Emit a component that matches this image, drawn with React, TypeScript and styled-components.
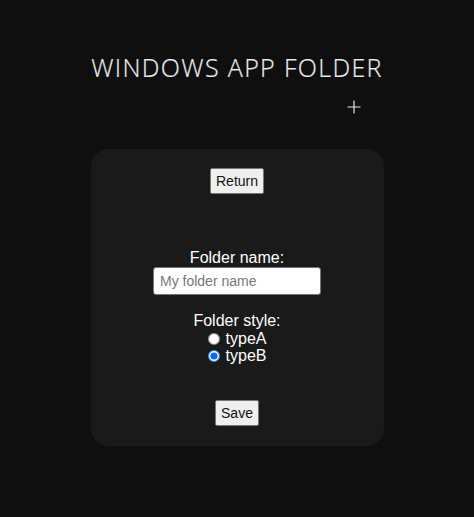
import React, { useState } from 'react'
import styled, { createGlobalStyle } from 'styled-components'

const GlobalStyle = createGlobalStyle`
  html, body {
    margin: 0;
    padding: 0;
    background: #0f0f10;
  }
  body {
    font-family: "Liberation Sans", Arial, sans-serif;
  }
`

const Page = styled.div`
  min-height: 517px;
  display: flex;
  flex-direction: column;
  align-items: center;
  padding-top: 50px;
  box-sizing: border-box;
`

const Title = styled.h1`
  margin: 0;
  font-family: "Open Sans", sans-serif;
  font-weight: 300;
  font-size: 25px;
  line-height: 34px;
  letter-spacing: 1.35px;
  color: #ececec;
  -webkit-text-stroke: 0.2px #ececec;
`

const AddRow = styled.div`
  width: 290px;
  display: flex;
  justify-content: flex-end;
  padding-right: 20px;
  box-sizing: border-box;
  margin-top: 15px;
  height: 16px;
`

const AddButton = styled.button`
  background: none;
  border: none;
  padding: 0;
  width: 16px;
  height: 16px;
  display: flex;
  align-items: center;
  justify-content: center;
  cursor: pointer;
`

const Panel = styled.div`
  margin-top: 34px;
  width: 293px;
  height: 297px;
  background: #1a1a1a;
  border-radius: 18px;
  display: flex;
  flex-direction: column;
  align-items: center;
  padding: 19px 0 18px;
  box-sizing: border-box;
  color: #ffffff;
`

const PlainButton = styled.button<{ $top?: number }>`
  margin-top: ${({ $top }) => $top ?? 0}px;
  font-family: "Liberation Sans", Arial, sans-serif;
  font-size: 14px;
  padding: 4px 5px;
  background: #efefef;
  color: #111;
  border: 1px solid #767676;
  border-radius: 2px;
  height: 26px;
  line-height: 16px;
`

const Field = styled.div<{ $top: number }>`
  margin-top: ${({ $top }) => $top}px;
  display: flex;
  flex-direction: column;
  align-items: center;
`

const Label = styled.label`
  font-size: 16px;
  line-height: 18px;
`

const TextInput = styled.input`
  width: 168px;
  height: 28px;
  box-sizing: border-box;
  border: 1px solid #767676;
  border-radius: 3px;
  padding: 0 6px;
  font-family: "Liberation Sans", Arial, sans-serif;
  font-size: 14px;
  color: #111;
  background: #fff;
  &::placeholder {
    color: #777;
  }
`

const RadioRow = styled.label`
  display: flex;
  align-items: center;
  font-size: 16px;
  line-height: 17px;
`

const Radio = styled.input`
  margin: 0 6px 0 0;
  width: 12px;
  height: 12px;
  accent-color: #0b6cf0;
`

export default function App() {
  const [style, setStyle] = useState('typeB')
  return (
    <>
      <GlobalStyle />
      <Page>
        <Title>WINDOWS APP FOLDER</Title>
        <AddRow>
          <AddButton aria-label="Add">
            <svg width="14" height="14" viewBox="0 0 14 14">
              <path d="M7 0.5V13.5M0.5 7H13.5" stroke="#e8e8e8" strokeWidth="1.2" />
            </svg>
          </AddButton>
        </AddRow>
        <Panel>
          <PlainButton>Return</PlainButton>
          <Field $top={55}>
            <Label htmlFor="fname">Folder name:</Label>
            <TextInput id="fname" placeholder="My folder name" />
          </Field>
          <Field $top={17}>
            <Label>Folder style:</Label>
            <RadioRow>
              <Radio
                type="radio"
                name="style"
                checked={style === 'typeA'}
                onChange={() => setStyle('typeA')}
              />
              typeA
            </RadioRow>
            <RadioRow>
              <Radio
                type="radio"
                name="style"
                checked={style === 'typeB'}
                onChange={() => setStyle('typeB')}
              />
              typeB
            </RadioRow>
          </Field>
          <PlainButton $top={36}>Save</PlainButton>
        </Panel>
      </Page>
    </>
  )
}
